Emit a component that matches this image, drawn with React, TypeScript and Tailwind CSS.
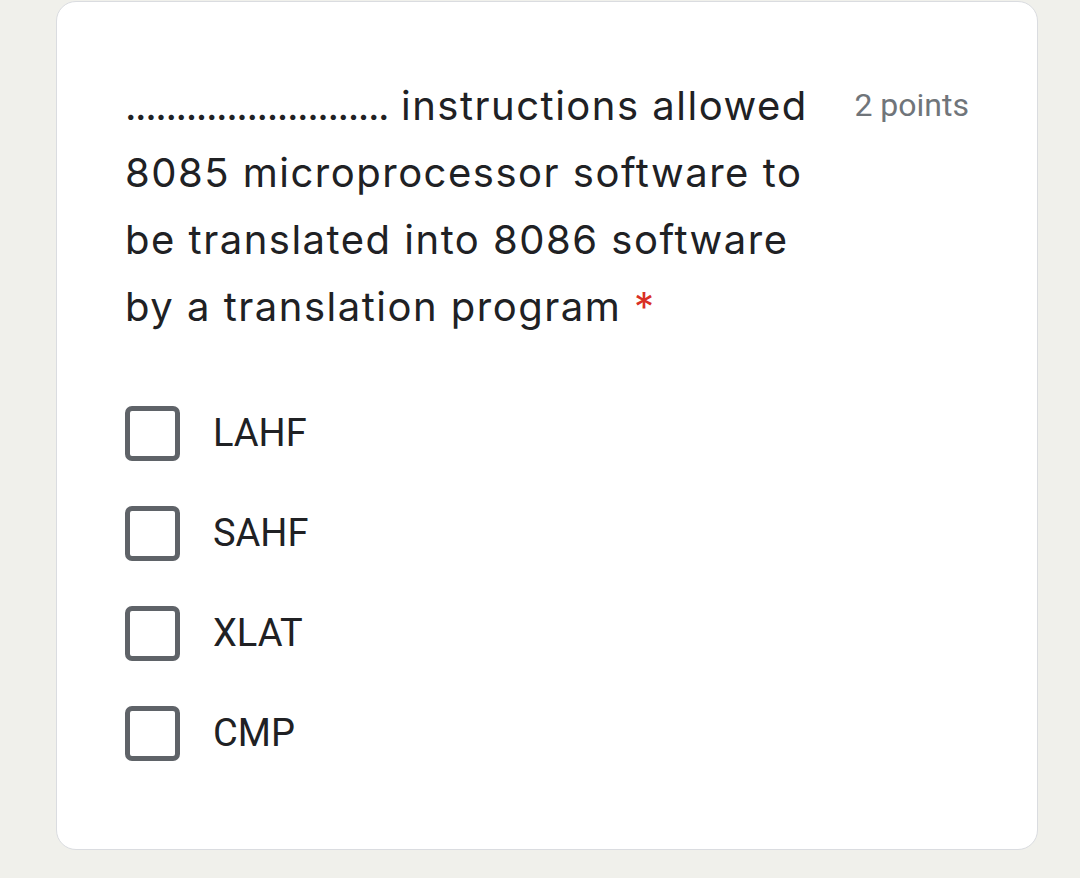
export default function App() {
  const options = ["LAHF", "SAHF", "XLAT", "CMP"];
  return (
    <div className="w-[1080px] h-[878px] bg-[#f0f0eb] pl-[56px] pr-[42px] pt-[1px] pb-[28px]">
      <div className="h-full bg-white border border-[#dadce0] rounded-[20px] pl-[68px] pr-[68px] pt-[70px]">
        <div className="flex items-start justify-between">
          <div className="text-[40px] leading-[67px] text-[#202124] whitespace-nowrap tracking-[1.5px]" style={{ fontFamily: 'Inter, sans-serif' }}>
            <span className="tracking-[-1.4px]">..........................</span> instructions allowed
            <br />8085 microprocessor software to
            <br />be translated into 8086 software
            <br />by a translation program <span className="text-[#d93025]">*</span>
          </div>
          <div className="text-[32px] leading-[67px] text-[#70757a] whitespace-nowrap" style={{ fontFamily: 'Roboto, sans-serif' }}>2 points</div>
        </div>
        <div className="mt-[65px] flex flex-col gap-[43px]">
          {options.map((o) => (
            <div key={o} className="flex items-center gap-[33px]">
              <div className="w-[55px] h-[55px] border-[5px] border-[#5f6368] rounded-[7px]" />
              <div className="text-[38px] text-[#202124]" style={{ fontFamily: 'Roboto, sans-serif' }}>{o}</div>
            </div>
          ))}
        </div>
      </div>
    </div>
  );
}
